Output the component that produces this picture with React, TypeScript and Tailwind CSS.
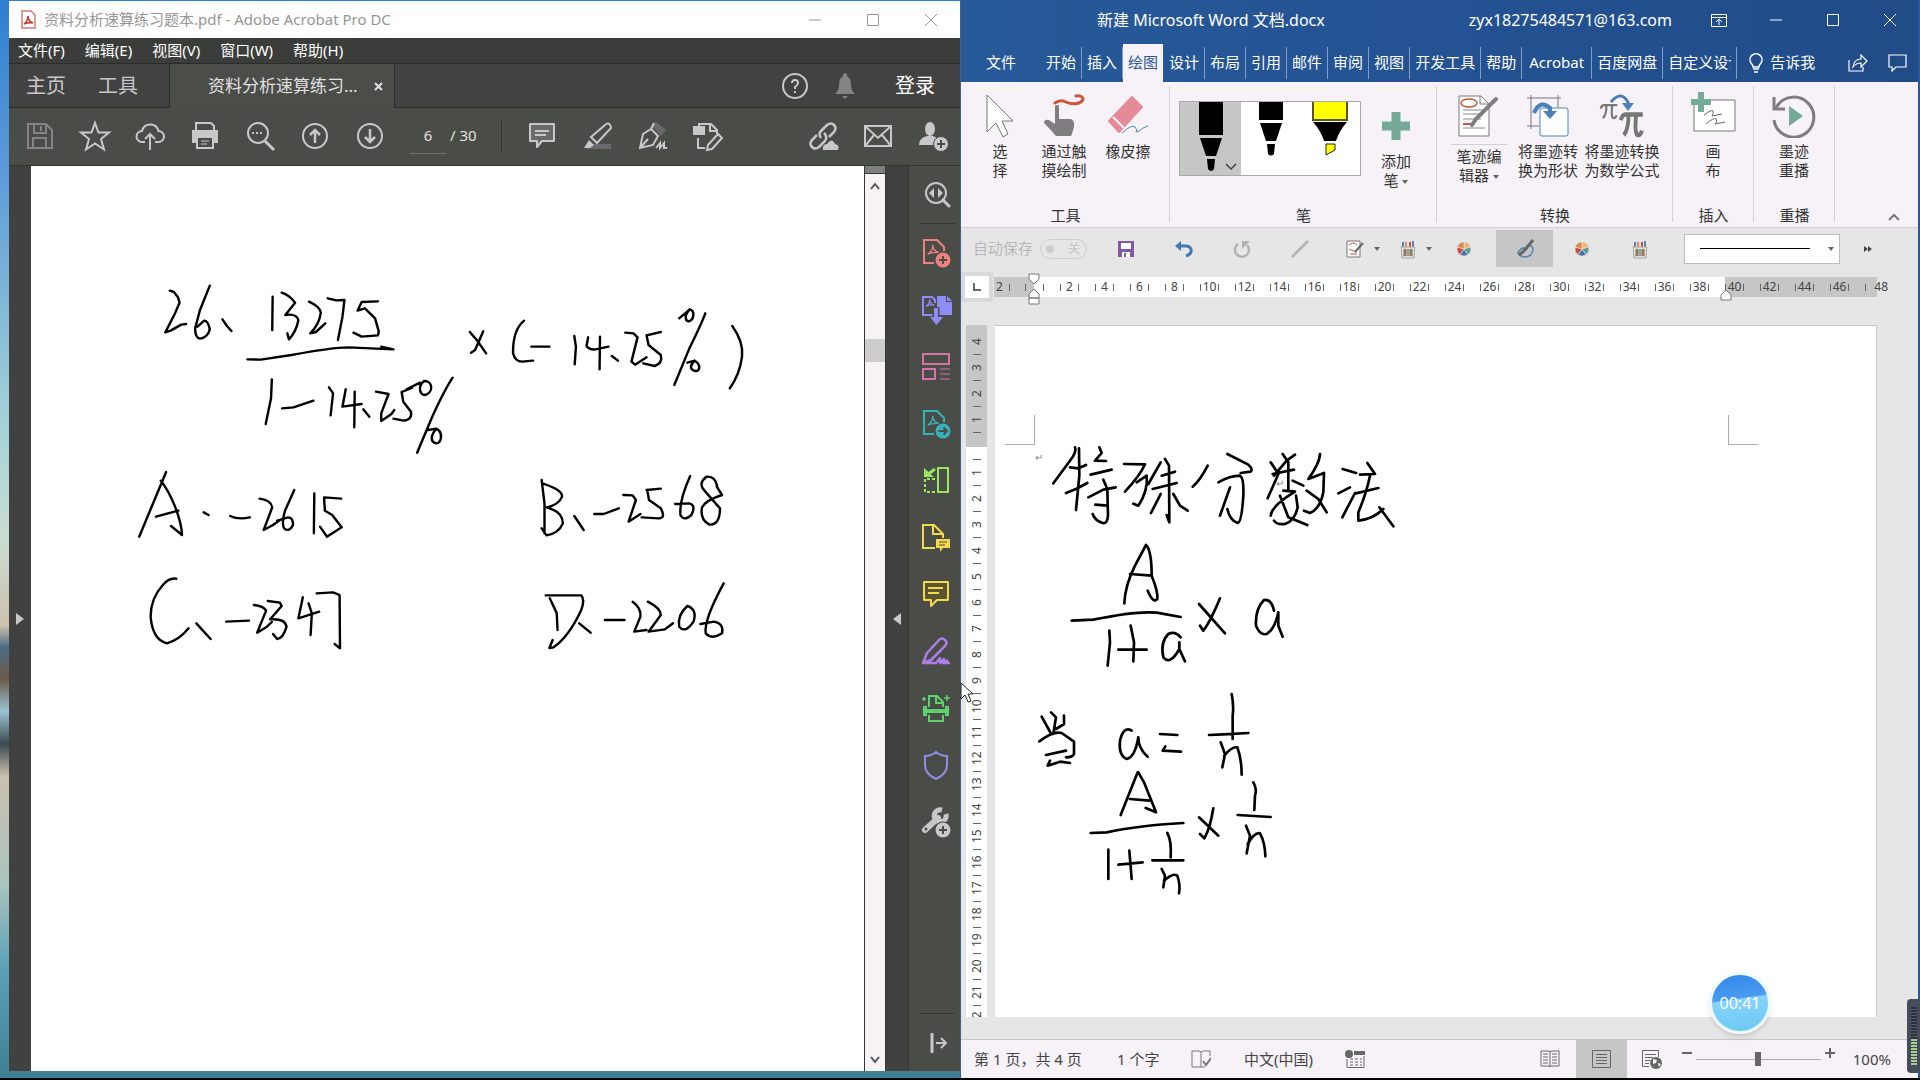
import React from 'react';

type Kids = { children?: React.ReactNode };

function Svg({ w, h, vb, children, className = '' }: Kids & { w: number; h: number; vb?: string; className?: string }) {
  return (
    <svg width={w} height={h} viewBox={vb ?? `0 0 ${w} ${h}`} fill="none" stroke="currentColor" strokeWidth={2} className={`shrink-0 ${className}`} aria-hidden="true">
      {children}
    </svg>
  );
}

function IconButton({ label, children, className = '' }: Kids & { label: string; className?: string }) {
  return (
    <button aria-label={label} className={`flex shrink-0 items-center justify-center ${className}`}>
      {children}
    </button>
  );
}

/* ---------- Acrobat ---------- */

const pdfMark = 'M9 19c4-2 6-6 6-11c0 6 3 8 7 9c-5-.5-9 0-13 2z';

const questionInk = [
  'M122 62L132 66L142 82L146 98L134 132L111 187L124 182L150 164L162 162',
  'M220 47L196 120L184 175Q184 204 196 206Q216 202 220 178Q216 152 206 152L190 170',
  'M251 148L262 168L273 183M374 80L373 180',
  'M396 68Q415 75 429 98L405 135Q432 130 437 150Q432 185 414 208L410 190',
  'M463 95Q490 110 492 128Q488 165 466 190L480 186L503 160',
  'M509 85L530 91L550 90L545 140L534 210',
  'M632 94L592 96L582 122L600 115L625 145L634 185L632 196L592 200L572 188',
  'M312 268L345 269L420 255Q520 232 560 232L670 238L640 230',
  'M857 186L874 210L897 250M890 184L870 240L860 248',
  'M990 152Q962 180 963 250Q968 275 985 275L1012 272M1008 230L1052 230M1113 198L1117 230L1114 283',
  'M1147 202L1143 228Q1150 240 1165 238L1197 230M1176 200L1175 298M1205 258L1220 272',
  'M1238 188L1258 190L1268 202L1253 275L1262 284L1290 262',
  'M1290 196L1325 186M1290 196L1295 225L1325 255Q1330 280 1310 288L1282 280',
  'M1370 145L1396 118C1380 138 1386 154 1394 154C1408 147 1408 122 1396 118',
  'M1434 130Q1425 160 1395 235L1358 345M1390 278L1408 272C1425 285 1420 305 1410 303C1395 300 1396 285 1408 272',
  'M1500 168Q1528 215 1524 260Q1518 315 1494 355',
  'M372 328L370 385L357 462M397 415L425 412L474 392M512 352L522 370L516 436',
  'M553 358L545 410L592 402M575 365L574 472M596 418L611 440',
  'M627 365L658 372L640 430L640 453L665 432L672 420',
  'M690 366L715 354M690 366L694 395L713 425Q716 450 695 452L670 446',
  'M702 358L735 338M745 333C728 350 735 374 747 375C768 368 768 333 745 333',
  'M815 323Q795 360 765 440L728 548M755 480L775 476C795 490 785 522 775 520C758 515 762 495 775 476',
  'M113 606L47 800M100 632C125 670 150 745 152 795L125 768M88 740L143 722M205 727L217 735M270 738Q290 750 318 742',
  'M342 686Q370 690 373 712L352 780L375 765L392 750M427 660L405 720Q395 760 402 775Q415 788 424 765Q424 742 412 742L385 752',
  'M476 670L475 790M500 682L542 686M500 684L502 722L520 735L543 772L507 800L490 770',
  'M1033 630L1040 700L1040 790M1035 640Q1085 660 1083 680Q1075 705 1045 712Q1085 725 1085 760Q1075 790 1045 796L1033 775',
  'M1113 738L1136 780M1162 732L1185 732L1222 715M1233 675L1256 676L1264 690L1246 755L1275 732',
  'M1290 660L1325 656M1292 662L1296 690L1325 715Q1338 745 1320 745L1278 742',
  'M1397 618Q1370 690 1373 735Q1382 755 1400 735Q1412 705 1395 700L1360 702',
  'M1463 648Q1458 618 1437 620Q1415 640 1432 662L1470 715Q1470 765 1444 764Q1420 748 1426 712Q1436 690 1475 675L1462 650',
  'M138 926Q120 922 105 945Q75 985 75 1040Q80 1110 115 1120Q145 1110 168 1075M187 1060L222 1107M260 1055L316 1052',
  'M328 1005Q352 1008 358 1022L336 1088L360 1070L372 1056M362 993L392 998L396 1008L368 1048Q405 1045 408 1070Q400 1105 385 1107L375 1092',
  'M448 982L437 1045L488 1025M462 1000L470 1030L467 1095M482 970L522 967L538 975L539 1135L526 1122',
  'M1043 976L1130 976Q1140 990 1130 1020Q1100 1100 1062 1132L1052 1134L1060 1110M1053 985L1070 1030L1072 1080',
  'M1125 1060L1153 1088M1188 1050L1236 1050M1256 995Q1278 1015 1275 1040L1260 1085L1290 1080',
  'M1293 995Q1325 1015 1325 1035L1295 1085L1335 1078L1355 1060',
  'M1390 1008Q1365 1035 1370 1070Q1385 1092 1405 1055Q1415 1018 1390 1008M1479 940Q1430 1050 1435 1090Q1450 1110 1475 1090Q1480 1060 1455 1055L1422 1062',
];

const toolIcons: { label: string; color: string; art: React.ReactNode }[] = [
  {
    label: '创建 PDF', color: 'text-[#f08080]',
    art: <><path d="M12 25H2V2h13l7 7v4" /><path d={pdfMark} transform="translate(-2 0) scale(.85)" strokeWidth="1.5" /><circle cx="21" cy="22" r="7.5" fill="currentColor" stroke="none" /><path d="M21 18v8M17 22h8" stroke="#4a4c48" /></>,
  },
  {
    label: '合并文件', color: 'text-[#8f8cf5]',
    art: <><path d="M14 20H1V2h9l3 3v3" /><path d="M15 1h9v6h6v13H15z" fill="currentColor" stroke="none" /><path d="M25 1l5 5h-5z" fill="currentColor" stroke="none" /><path d={pdfMark} transform="translate(-2 -1) scale(.65)" strokeWidth="2" /><path d="M14 12v12" stroke="#4a4c48" strokeWidth="7" /><path d="M14 13v11" strokeWidth="4" /><path d="M8 22h13l-6.500 8z" fill="currentColor" stroke="none" /></>,
  },
  {
    label: '组织页面', color: 'text-[#d873a9]',
    art: <><path d="M1 2h26v10H1zM1 17h12v10H1z" /><path d="M18 17h10M18 22h10M18 27h10" strokeWidth="1" /></>,
  },
  {
    label: '导出 PDF', color: 'text-[#36b3b8]',
    art: <><path d="M12 25H2V2h13l7 7v4" /><path d={pdfMark} transform="translate(-2 0) scale(.85)" strokeWidth="1.5" /><circle cx="21" cy="22" r="7.500" fill="currentColor" stroke="none" /><path d="M16.500 22h8M21.500 18.500l3.500 3.500-3.500 3.500" stroke="#4a4c48" /></>,
  },
  {
    label: '扫描', color: 'text-[#9ae65c]',
    art: <><path d="M16 2h10v24H16z" /><path d="M3 13v13h11" strokeDasharray="3 2" /><path d="M13 13H3" strokeDasharray="3 2" /><path d="M13 3l-8 6" strokeWidth="3" /><path d="M2 2v9h10z" fill="currentColor" stroke="none" /></>,
  },
  {
    label: '发送以供注释', color: 'text-[#f3d94b]',
    art: <><path d="M13 25H1V2h11l9 9v4M11 2v9h10" /><path d="M14 16h14v9h-7l-3 4v-4h-4z" fill="currentColor" stroke="none" /><path d="M17 19h8M17 22h6" stroke="#4a4c48" strokeWidth="1" /></>,
  },
  {
    label: '注释', color: 'text-[#f3d94b]',
    art: <><path d="M2 2h24v18H15l-6 6v-6H2z" strokeLinejoin="round" fill="#5a5630" /><path d="M6 8h15M6 13h11" /></>,
  },
  {
    label: '填写和签名', color: 'text-[#ad7ee6]',
    art: <path d="M1 26L5 16L17 3q3-3 6 0t0 6L9 23zM1 26h13l4-5v5l4-4v4l4-3 M20 26h8" strokeLinejoin="round" strokeWidth="2.500" />,
  },
  {
    label: '印刷制作', color: 'text-[#5fd06e]',
    art: <><path d="M7 13V2h8l6 6v5M14 2v7h7" /><path d="M1 12h4v3h18v-3h4v10h-4v-3H5v3H1z" fill="currentColor" stroke="none" /><path d="M7 21v6h14v-6" /><path d="M25 1v6M22 4h6M2 3v4M0 5h4" strokeWidth="1.500" /></>,
  },
  {
    label: '保护', color: 'text-[#8c8ee0]',
    art: <path d="M14 1q5 4 11 4v9q0 9-11 14Q3 23 3 14V5q6 0 11-4z" />,
  },
  {
    label: '更多工具', color: 'text-[#c9c7c9]',
    art: <><path d="M3 22L16 10" strokeWidth="6" strokeLinecap="round" /><path d="M20 2a6 6 0 1 0 4 4" strokeWidth="5" /><circle cx="4" cy="21" r="1.500" fill="#4a4c48" stroke="none" /><circle cx="21" cy="22" r="8.500" fill="#4a4c48" stroke="none" /><circle cx="21" cy="22" r="7.500" fill="currentColor" stroke="none" /><path d="M21 18v8M17 22h8" stroke="#4a4c48" /></>,
  },
];

const barLeft: { label: string; art: React.ReactNode; dim?: boolean }[] = [
  { label: '保存', dim: true, art: <path d="M2 2h18l6 6v18H2zM8 2v9h12V2M15 4v5M7 26V16h13v10" /> },
  { label: '加星标', art: <path d="M14 1l3.500 9.500H28l-8 6.500 3 10.500-9-6-9 6 3-10.500-8-6.500h10.500z" /> },
  { label: '上传', art: <path d="M9 20H6a5.500 5.500 0 0 1 0-11q2-7 9-6.500 6 .5 7.500 6.500a5.500 5.500 0 0 1 0 11H19M14 28V12M9 17l5-5 5 5" /> },
  { label: '打印', art: <><path d="M5 8V1h15l3 3v4" /><path d="M1 8h26v13H1z" fill="currentColor" stroke="none" /><path d="M6 15h16v11H6z" fill="#4a4c48" /><path d="M10 19h8M10 22h6" strokeWidth="1" /></> },
  { label: '查找', art: <><circle cx="12" cy="11" r="10" /><path d="M19 19l9 9" strokeWidth="3" /><path d="M6 11h12" strokeDasharray="2 2" /></> },
  { label: '上一页', art: <><circle cx="14" cy="14" r="12" /><path d="M14 21V8M9 13l5-5 5 5" strokeWidth="2.500" /></> },
  { label: '下一页', art: <><circle cx="14" cy="14" r="12" /><path d="M14 7v13M9 15l5 5 5-5" strokeWidth="2.500" /></> },
];

const barMid: { label: string; art: React.ReactNode }[] = [
  { label: '注释', art: <path d="M2 2h24v17H14l-5 6v-6H2zM7 9h14M7 13h11" fill="#6b696b" strokeLinejoin="round" /> },
  { label: '高亮', art: <><path d="M8 22h20v5H3z" fill="#6b696b" stroke="none" /><path d="M8 15L22 3q3-3 5 0t0 4L14 21zM8 15l6 6" /><path d="M1 26l5-8 5 5-4 3z" fill="currentColor" stroke="none" /></> },
  { label: '签名', art: <><path d="M2 26L5 12 13 7 20 14 15 23zM2 26l8-9" /><path d="M14 4l4-4 10 8-5 6z" fill="#6b696b" stroke="none" /><path d="M16 1l-3 6M18 26l4-5v5l4-5v5h3" /></> },
  { label: '编辑', art: <><path d="M1 5h10v7H1z" fill="currentColor" /><path d="M6 4V2h12l6 6v4M17 2v7h7M5 16v10h7" /><path d="M14 28l1-5 10-11 4 4-10 11z" /></> },
];

const barRight: { label: string; art: React.ReactNode }[] = [
  { label: '共享链接', art: <><path d="M12 16q-3-4 0-7l6-6q4-3 7 0t0 7l-5 5M15 11q4 4 1 8l-6 6q-4 3-7 0t0-7l5-5" strokeWidth="2.500" /><path d="M14 28q-1-6 4-6 5-7 8 0 5 1 3 6z" fill="currentColor" stroke="none" /></> },
  { label: '电子邮件', art: <path d="M1 4h26v20H1zM1 4l13 12L27 4M1 24l9-11M27 24l-9-11" /> },
  { label: '共享', art: <><ellipse cx="11" cy="7" rx="5" ry="7" fill="currentColor" stroke="none" /><path d="M0 23q0-7 8-9h6q6 2 6 9z" fill="currentColor" stroke="none" /><circle cx="22" cy="22" r="7.500" fill="currentColor" stroke="#4a4c48" strokeWidth="1" /><path d="M22 18v8M18 22h8" stroke="#4a4c48" /></> },
];

function BarButton({ label, children, dim }: Kids & { label: string; dim?: boolean }) {
  return (
    <IconButton label={label} className={`h-10 w-[55px] ${dim ? 'text-[#858385]' : 'text-[#c9c7c9]'}`}>
      <Svg w={28} h={28} className="overflow-visible">{children}</Svg>
    </IconButton>
  );
}

function AcrobatWindow() {
  return (
    <section aria-label="Adobe Acrobat Pro DC" className="flex min-h-0 flex-1 flex-col bg-[#4a4c48]">
      <header className="flex h-[37px] shrink-0 items-center bg-white pl-3 text-[#969696]">
        <Svg w={15} h={19} className="text-[#cf7b75]"><path d="M1 1h9l4 4v13H1z" strokeWidth="1.500" /><path d="M3 14q4-3 4-8q0 5 5 7q-5-1-9 1z" strokeWidth="1.500" stroke="#c0392b" /></Svg>
        <h1 className="ml-2 flex-1 truncate text-[15px]">资料分析速算练习题本.pdf - Adobe Acrobat Pro DC</h1>
        <IconButton label="最小化" className="h-full w-[58px]"><Svg w={12} h={12}><path d="M0 6h12" strokeWidth="1" /></Svg></IconButton>
        <IconButton label="最大化" className="h-full w-[58px]"><Svg w={12} h={12}><path d="M.5.5h11v11H.5z" strokeWidth="1" /></Svg></IconButton>
        <IconButton label="关闭" className="h-full w-[58px]"><Svg w={12} h={12}><path d="M0 0l12 12M12 0L0 12" strokeWidth="1" /></Svg></IconButton>
      </header>
      <nav className="flex h-[26px] shrink-0 items-center gap-5 border-b border-[#2a2c2a] bg-[#3b3d3a] pb-[2px] pl-[9px] text-[15px] leading-5 text-white">
        <button>文件(F)</button><button>编辑(E)</button><button>视图(V)</button><button>窗口(W)</button><button>帮助(H)</button>
      </nav>
      <div className="flex h-11 shrink-0 bg-[#424242] text-[#c9c7c9]">
        <div className="flex w-[161px] items-center gap-8 border-r border-b border-[#2a2c2a] pl-[17px] text-[20px]">
          <button>主页</button><button>工具</button>
        </div>
        <div className="flex w-[224px] items-center bg-[#4b4d49] pl-[38px] text-[17px] text-[#e2e0e2]">
          <span className="w-[150px] truncate">资料分析速算练习...</span>
          <IconButton label="关闭标签" className="ml-4"><Svg w={9} h={9}><path d="M1 1l7 7M8 1L1 8" /></Svg></IconButton>
        </div>
        <div className="flex flex-1 items-center justify-end border-b border-l border-[#2a2c2a] pr-[25px]">
          <IconButton label="帮助"><Svg w={28} h={28}><circle cx="14" cy="14" r="12" /><path d="M11 11q0-3 3-3t3 3q0 2-3 4v2M14 19v2" /></Svg></IconButton>
          <IconButton label="通知" className="ml-[25px] text-[#858385]"><Svg w={22} h={26}><path d="M1 21q4-3 4-9 0-8 6-10 6 2 6 10 0 6 4 9zM8 23h6l-3 3z" fill="currentColor" stroke="none" /><circle cx="11" cy="2" r="2" fill="currentColor" stroke="none" /></Svg></IconButton>
          <button className="ml-[39px] text-[20px] text-white">登录</button>
        </div>
      </div>
      <div className="flex h-[58px] shrink-0 items-center border-b border-[#343634] pb-[2px] pl-[3px] text-[#c9c7c9]">
        {barLeft.map((b) => <BarButton key={b.label} label={b.label} dim={b.dim}>{b.art}</BarButton>)}
        <input aria-label="页码" defaultValue="6" className="ml-[13px] h-9 w-9 border-b border-[#6f716e] text-center text-[15px] text-[#e2e0e2]" />
        <span className="ml-1 text-[15px] text-[#e2e0e2]">/ 30</span>
        <span className="ml-6 h-9 w-px bg-[#343634]" />
        <span className="ml-[13px] flex">
          {barMid.map((b) => <BarButton key={b.label} label={b.label}>{b.art}</BarButton>)}
        </span>
        <span className="ml-auto flex">
          {barRight.map((b) => <BarButton key={b.label} label={b.label}>{b.art}</BarButton>)}
        </span>
      </div>
      <div className="flex min-h-0 flex-1">
        <button aria-label="展开导览窗格" className="flex w-[22px] shrink-0 items-center justify-center bg-[#414141] text-[#c9c7c9]">
          <Svg w={8} h={12}><path d="M0 0l8 6-8 6z" fill="currentColor" stroke="none" /></Svg>
        </button>
        <main className="relative min-w-0 flex-1 overflow-hidden bg-white">
          <svg role="img" aria-label="26、13275/(1-14.25%) × (-14.25%)" viewBox="0 0 1568 1290" preserveAspectRatio="none" fill="none" stroke="#000" strokeWidth="2.4" strokeLinecap="round" strokeLinejoin="round" className="absolute top-[104px] left-[89px] h-[430px] w-[640px]">
            {questionInk.map((d) => <path key={d} d={d} vectorEffect="non-scaling-stroke" />)}
          </svg>
        </main>
        <div className="flex w-[22px] shrink-0 flex-col border-x border-[#343634] bg-[#f6f2f6] text-[#555]">
          <div className="h-2 border-b border-[#343634] bg-[#7d7f7c]" />
          <IconButton label="向上滚动" className="h-6"><Svg w={10} h={8}><path d="M1 7l4-5 4 5" /></Svg></IconButton>
          <div className="mt-[141px] h-[23px] bg-[#cdcbcd]" />
          <IconButton label="向下滚动" className="mt-auto h-[22px]"><Svg w={10} h={8}><path d="M1 1l4 5 4-5" /></Svg></IconButton>
        </div>
        <button aria-label="收起工具窗格" className="flex w-[22px] shrink-0 items-center justify-center bg-[#414141] text-[#c9c7c9]">
          <Svg w={8} h={12}><path d="M8 0L0 6l8 6z" fill="currentColor" stroke="none" /></Svg>
        </button>
        <aside className="flex w-[52px] shrink-0 flex-col items-center border-l border-[#343634] pl-1">
          <IconButton label="搜索工具" className="h-[57px] text-[#c9c7c9]"><Svg w={28} h={28}><circle cx="13" cy="12" r="10" /><path d="M20 19l6 6" strokeWidth="3" strokeLinecap="round" /><path d="M11 7v10l-5-5zM15 7v10l5-5z" fill="currentColor" stroke="none" /></Svg></IconButton>
          <div className="h-px w-9 shrink-0 bg-[#343634]" />
          {toolIcons.map((t) => (
            <IconButton key={t.label} label={t.label} className={`h-[57px] ${t.color}`}>
              <Svg w={29} h={29} className="overflow-visible">{t.art}</Svg>
            </IconButton>
          ))}
          <div className="mt-auto h-px w-9 shrink-0 bg-[#343634]" />
          <IconButton label="折叠" className="h-[57px] pl-1 text-[#c9c7c9]"><Svg w={18} h={20}><path d="M2 1v18" strokeWidth="3" strokeLinecap="round" /><path d="M6 10h10M11 5l5 5-5 5" /></Svg></IconButton>
        </aside>
      </div>
    </section>
  );
}

/* ---------- Word ---------- */

const tabs = ['开始', '插入', '绘图', '设计', '布局', '引用', '邮件', '审阅', '视图', '开发工具', '帮助', 'Acrobat', '百度网盘'];

const notesInk = [
  'M315 415Q320 430 300 455L250 523M327 418L328 500L318 603M300 475L325 478L348 468M288 552L318 540L352 522',
  'M388 415L395 432L375 455L408 456M362 497L425 482M355 565L400 542L437 535M400 512L412 540L414 620Q412 645 398 642Q375 635 368 615M376 587L412 590',
  'M462 465L525 466Q510 500 465 548M500 520L530 500Q535 545 505 590L490 584M572 460L535 525',
  'M585 450L597 470L598 640L590 618M575 500L615 488M548 540L620 522M572 555L543 612M610 555L630 590L653 605',
  'M713 470Q690 515 668 533M772 435L835 467Q850 480 842 488L812 492M745 520Q780 500 810 500Q822 505 820 560Q815 640 803 642Q780 635 772 600M780 535L750 620',
  'M902 460L922 490M975 437L950 455L912 500M908 495L972 482M938 435L955 460L955 545M925 495L893 568M968 515L1000 530',
  'M940 545L975 548Q905 590 902 620M930 560L955 625L1012 648M978 560L983 595Q975 635 945 645Q920 648 912 635',
  'M1050 435Q1050 460 1015 510L1062 492L1060 550Q1050 600 1020 612L1002 605M1010 545L1045 570L1070 610',
  'M1118 480L1158 492M1105 553L1140 535M1117 625L1155 552M1192 462L1215 495L1170 497M1158 553L1225 537M1200 500Q1190 550 1165 610L1165 635Q1210 630 1240 600M1228 595L1270 652',
  'M528 708L495 770Q465 830 463 883M530 710Q545 730 545 800Q565 850 562 870Q550 885 533 845M480 795L545 800',
  'M305 935L370 932Q500 905 560 911L632 924M687 885L765 973M750 868Q720 940 700 965L690 950',
  'M912 905Q905 870 882 873Q855 900 858 950Q870 980 890 975Q915 960 925 910L925 950L938 983',
  'M418 965L420 1000L413 1070M482 950L492 1000L490 1057M445 1022L530 1022M632 985Q615 965 595 975Q570 1000 580 1045Q600 1070 628 1020L628 1000M628 1020L645 1057',
  'M215 1223L242 1272M243 1210L258 1225L250 1275M282 1220L282 1245L258 1260M208 1297Q250 1265 275 1272L312 1298L312 1335Q308 1345 288 1345M228 1338L288 1325M240 1355L233 1370L270 1358L300 1362',
  'M485 1265Q460 1250 450 1295Q445 1340 470 1350Q495 1345 505 1285M505 1285Q505 1320 533 1343M570 1275L622 1278M586 1312L578 1325L633 1328',
  'M785 1155Q792 1190 788 1220L788 1290M717 1278L760 1276L835 1272M752 1300L765 1335L757 1375M763 1340Q785 1312 802 1315Q815 1350 815 1397',
  'M503 1390L452 1518M505 1390L522 1420L558 1510L527 1497M480 1470L538 1475M362 1572L410 1570Q500 1550 640 1542',
  'M415 1622L415 1710M478 1625L485 1710M445 1667L518 1660M592 1572Q605 1595 602 1645M547 1654L640 1654',
  'M575 1680L585 1700L580 1735M582 1715Q610 1690 622 1700Q632 1730 627 1753M687 1525L745 1580M730 1498Q720 1560 703 1588L690 1575',
  'M850 1420Q862 1440 855 1460L853 1503M803 1518L902 1524M828 1550L840 1580L830 1633M833 1605Q855 1568 870 1573Q885 1600 886 1642',
];

function Caret() {
  return <Svg w={6} h={4} className="inline-block align-middle text-[#666]"><path d="M0 0h6L3 4z" fill="currentColor" stroke="none" /></Svg>;
}

function Group({ label, className, children }: Kids & { label: string; className: string }) {
  return (
    <div role="group" aria-label={label} className={`relative flex shrink-0 flex-col ${className} after:absolute after:top-1 after:right-0 after:bottom-[5px] after:w-px after:bg-[#d2d0d2]`}>
      <div className="flex h-[123px]">{children}</div>
      <div className="text-center leading-5">{label}</div>
    </div>
  );
}

function Big({ lines, icon, className, caret }: { lines: string[]; icon: React.ReactNode; className: string; caret?: boolean }) {
  return (
    <button className={`flex flex-col items-center pt-3 leading-[19px] whitespace-nowrap ${className}`}>
      <span className="flex h-11 items-start">{icon}</span>
      <span className="mt-1">
        {lines.map((l, i) => <span key={l} className="block">{l}{caret && i === lines.length - 1 && <> <Caret /></>}</span>)}
      </span>
    </button>
  );
}

const pi = 'M1 8Q2 3 6 3H24M9 3Q9 16 4 21M17 3Q15 21 19 21Q22 21 23 17';

function Cup() {
  return (
    <Svg w={16} h={20}>
      <path d="M3 9V3M13 9V2" stroke="#5f7fae" /><path d="M6 9V3" stroke="#d08b5e" /><path d="M10 9V3" stroke="#d3473b" />
      <path d="M1 8h14l-1 11H2z" stroke="#aaa" strokeWidth="1" fill="#ddd" /><path d="M5 10v7M11 10v7" stroke="#8a7a56" strokeWidth="3" /><path d="M8 10v7" stroke="#555" strokeWidth="1" />
    </Svg>
  );
}

function Wheel() {
  return (
    <Svg w={14} h={14}>
      <g stroke="#e7e5e7" strokeWidth=".6">
        <path d="M7 7V0A7 7 0 0 1 13.700 5z" fill="#e9b872" /><path d="M7 7l6.700-2A7 7 0 0 1 11 12.700z" fill="#5d9c93" />
        <path d="M7 7l4 5.700a7 7 0 0 1-8 0z" fill="#4472a8" /><path d="M7 7l-4 5.700A7 7 0 0 1 .3 5z" fill="#c84f3f" /><path d="M7 7L.3 5A7 7 0 0 1 7 0z" fill="#dd8a4c" />
      </g>
    </Svg>
  );
}

function TitleAndTabs() {
  return (
    <header className="shrink-0 bg-linear-to-r from-[#275a98] via-[#245292] to-[#204b87] text-[15px] text-white">
      <div className="flex h-10 items-center text-[16px]">
        <h1 className="flex-1 truncate pr-2 text-center">新建 Microsoft Word 文档.docx</h1>
        <span className="mr-[18px]">zyx18275484571@163.com</span>
        <IconButton label="功能区显示选项" className="h-full w-[57px]"><Svg w={16} h={13}><path d="M.5.5h15v12H.5zM.5 3.500h15M8 11V5M5 8l3-3 3 3" strokeWidth="1" /></Svg></IconButton>
        <IconButton label="最小化" className="h-full w-[57px]"><Svg w={12} h={12}><path d="M0 6h12" strokeWidth="1" /></Svg></IconButton>
        <IconButton label="最大化" className="h-full w-[57px]"><Svg w={12} h={12}><path d="M.5.5h11v11H.5z" strokeWidth="1" /></Svg></IconButton>
        <IconButton label="关闭" className="h-full w-[57px]"><Svg w={12} h={12}><path d="M0 0l12 12M12 0L0 12" strokeWidth="1" /></Svg></IconButton>
      </div>
      <nav className="flex h-[42px] items-stretch pt-1">
        <button className="w-20 pb-[2px]">文件</button>
        {tabs.map((t) => (
          <button
            key={t}
            className={
              t === '绘图'
                ? 'w-[41px] border-r border-[#2b579a] bg-[#f6f2f7] pb-[2px] text-[#2b579a]'
                : t === 'Acrobat'
                  ? 'my-[3px] w-[70px] border-r border-[#7f9fcb] pb-[2px]'
                  : 'my-[3px] border-r border-[#7f9fcb] px-[5px] pb-[2px]'
            }
          >
            {t}
          </button>
        ))}
        <button className="my-[3px] w-[74px] border-r border-[#7f9fcb] px-[5px] pb-[2px] text-left">
          <span className="block w-[63px] overflow-hidden whitespace-nowrap">自定义设计</span>
        </button>
        <button className="ml-[11px] flex items-center gap-[6px] pb-[2px]">
          <Svg w={16} h={21}><path d="M5 15q0-2-2-4a6 6 0 1 1 10 0q-2 2-2 4zM5 17h6M6 20h4" strokeWidth="1.500" /></Svg>
          告诉我
        </button>
        <span className="mr-[11px] ml-auto flex gap-5">
          <IconButton label="共享"><Svg w={20} h={18}><path d="M1 6v11h14v-4M5 13q1-8 8-8V1l6 6-6 6V9q-5 0-8 4z" strokeWidth="1.200" /></Svg></IconButton>
          <IconButton label="批注"><Svg w={19} h={18}><path d="M1 1h17v12H8l-4 4v-4H1z" strokeWidth="1.200" /></Svg></IconButton>
        </span>
      </nav>
    </header>
  );
}

function Ribbon() {
  return (
    <div className="flex h-[146px] shrink-0 border-b border-[#d2d0d2] bg-[#f6f2f7] text-[15px] text-[#333]">
      <Group label="工具" className="w-[209px]">
        <Big className="ml-[7px] w-16" lines={['选', '择']} icon={<Svg w={28} h={44}><path d="M1 1v37l9-9 7 14 5-3-6-13h11z" fill="#fff" stroke="#777" strokeWidth="1" /></Svg>} />
        <Big className="w-16" lines={['通过触', '摸绘制']} icon={<Svg w={42} h={44}><path d="M12 9q5-4 11-1t13 1q6-3 3-6-2-2-6-1" stroke="#c9553b" strokeWidth="3" strokeLinecap="round" /><path d="M12 12q3-2 4 0v13h12q4 2 3 8-2 7-3 9H13Q6 34 1 29q0-4 5-3l6 4z" fill="#7f7d7f" stroke="none" /></Svg>} />
        <Big className="w-16" lines={['橡皮擦']} icon={<Svg w={40} h={42}><path d="M1 27L24 3l10 10-23 25z" fill="#e58a98" stroke="#e58a98" strokeLinejoin="round" /><path d="M5 23l11 11" stroke="#f6f2f7" /><path d="M14 39q10-9 13-6t1 5q3 0 7-4l5-2" stroke="#4a86b0" strokeWidth="1" /></Svg>} />
      </Group>
      <Group label="笔" className="w-[267px]">
        <div className="mt-[19px] ml-[9px] flex h-[75px] w-[182px] shrink-0 border border-[#aaa8aa] bg-white text-black">
          <button aria-label="笔 1" className="relative flex w-[61px] justify-center bg-[#c6c6c6]">
            <Svg w={24} h={70}><path d="M0 0h24v33H0zM1 36h22l-6 18H7zM8 57h8l-1 10q-3 4-6 0z" fill="currentColor" stroke="none" /></Svg>
            <Svg w={12} h={8} className="absolute right-1 bottom-1 text-[#444]"><path d="M1 1l5 5 5-5" strokeWidth="1.500" /></Svg>
          </button>
          <button aria-label="笔 2" className="flex w-[59px] justify-center">
            <Svg w={24} h={70}><path d="M0 0h24v18H0zM1 21h22l-6 18H7zM8 42h8l-1 10q-3 3-6 0z" fill="currentColor" stroke="none" /></Svg>
          </button>
          <button aria-label="荧光笔" className="flex w-[60px] justify-center">
            <Svg w={36} h={70}><path d="M1-1h34v19H1z" fill="#ff0" stroke="#55551a" /><path d="M1 20h34q-8 9-11 19H12Q9 29 1 20z" fill="currentColor" stroke="none" /><path d="M14 42h9v6l-9 5z" fill="#ff0" stroke="#222" strokeWidth="1" /></Svg>
          </button>
        </div>
        <button className="ml-[5px] flex w-[60px] flex-col items-center pt-[30px] leading-[19px]">
          <Svg w={28} h={28}><path d="M14 0v28M0 14h28" stroke="#75aa98" strokeWidth="9" /></Svg>
          <span className="mt-3 block">添加</span>
          <span className="block">笔 <Caret /></span>
        </button>
      </Group>
      <Group label="转换" className="w-[236px]">
        <button className="ml-[7px] flex w-[70px] flex-col items-center pt-3 leading-[19px]">
          <Svg w={42} h={44}><path d="M1 2h22l8 8v32H1z" fill="#fff" stroke="#777" strokeWidth="1" /><path d="M22 2v8h9" stroke="#777" strokeWidth="1" /><path d="M5 16h21M5 20h17M5 25h18M5 30h6M5 34h22" stroke="#888" strokeWidth="1" /><ellipse cx="11" cy="9" rx="8" ry="4" stroke="#c9553b" strokeWidth="1.500" /><path d="M5 30h10" stroke="#c9553b" /><path d="M38 5L18 25l-4 6" stroke="#7f7d7f" strokeWidth="4" strokeLinecap="round" /></Svg>
          <span className="mt-[6px] h-px w-14 bg-[#d2d0d2]" />
          <span className="mt-[2px] block">笔迹编</span>
          <span className="block">辑器 <Caret /></span>
        </button>
        <Big className="w-[68px]" lines={['将墨迹转', '换为形状']} icon={<Svg w={44} h={44}><path d="M5 1v34M32 1v12M1 4h34M1 32h12" stroke="#777" strokeWidth="1" /><rect x="14" y="14" width="28" height="28" rx="2" fill="#fff" stroke="#4a86b0" strokeWidth="1" /><path d="M8 19q6-14 16-5v6" stroke="#4a80b8" strokeWidth="4" /><path d="M17 17h14l-7 8z" fill="#4a80b8" stroke="none" /></Svg>} />
        <Big className="w-20" lines={['将墨迹转换', '为数学公式']} icon={<Svg w={46} h={46}><path d={pi} transform="translate(1 9) scale(.72)" stroke="#777" strokeWidth="3" /><path d={pi} transform="translate(21 17) scale(.95 1.150)" stroke="#777" strokeWidth="4" /><path d="M12 8Q22-4 29 8v3" stroke="#4a80b8" strokeWidth="3" /><path d="M23 9h12l-6 8z" fill="#4a80b8" stroke="none" /></Svg>} />
      </Group>
      <Group label="插入" className="w-[81px]">
        <Big className="w-20" lines={['画', '布']} icon={<Svg w={46} h={42} className="overflow-visible"><path d="M4 6h41v31H4z" fill="#fff" stroke="#777" strokeWidth="1" /><path d="M14 21q8-6 9-4t-1 5l10-2M16 30q8-7 10-5t-1 5l10-2" stroke="#666" strokeWidth="1" /><path d="M11-2v20M1 8h20" stroke="#75aa98" strokeWidth="6" /></Svg>} />
      </Group>
      <Group label="重播" className="w-[81px]">
        <Big className="w-20" lines={['墨迹', '重播']} icon={<Svg w={44} h={44}><path d="M4 14a20 20 0 1 1-2 12" stroke="#7f7d7f" strokeWidth="3" /><path d="M2 3v12h11" stroke="#7f7d7f" strokeWidth="3" /><path d="M17 12l14 10-14 10z" fill="#75aa98" stroke="none" /></Svg>} />
      </Group>
      <IconButton label="折叠功能区" className="mt-auto mr-[18px] mb-[6px] ml-auto text-[#777]"><Svg w={12} h={8}><path d="M1 7l5-5 5 5" /></Svg></IconButton>
    </div>
  );
}

function QuickAccess() {
  return (
    <div className="flex h-11 shrink-0 items-center pb-[3px] pl-3 text-[15px]">
      <label htmlFor="autosave" className="w-[67px] text-[#b9b7b9]">自动保存</label>
      <span className="relative flex h-5 w-[47px] items-center justify-end rounded-full border border-[#cfcdcf] pr-[6px] text-[12px] text-[#c4c2c4]">
        <input id="autosave" type="checkbox" className="absolute inset-0 appearance-none before:absolute before:top-[5px] before:left-[5px] before:size-2 before:rounded-full before:bg-[#cfcdcf]" />
        关
      </span>
      <IconButton label="保存" className="ml-[10px] w-[58px]"><Svg w={16} h={16}><path d="M0 0h16v16H0z" fill="#8158a3" stroke="none" /><path d="M3 2h10v6H3zM4 11h8v5H4z" fill="#fff" stroke="none" /><path d="M7 12v4" stroke="#8158a3" /></Svg></IconButton>
      <IconButton label="撤消" className="w-[58px]"><Svg w={18} h={16}><path d="M3 5h9q5 1 4 6-1 3-5 4" stroke="#3f7ab5" strokeWidth="3" /><path d="M0 5l6-5v10z" fill="#3f7ab5" stroke="none" /></Svg></IconButton>
      <IconButton label="恢复" className="w-[58px]"><Svg w={18} h={18}><path d="M5 4a7 7 0 1 0 9 1" stroke="#b3b1b3" strokeWidth="2.500" /><path d="M17 1H9v8z" fill="#b3b1b3" stroke="none" /></Svg></IconButton>
      <IconButton label="画笔" className="w-[58px]"><Svg w={18} h={18}><path d="M17 1L6 12l-5 5" stroke="#b3b1b3" strokeWidth="2.500" /></Svg></IconButton>
      <IconButton label="笔迹编辑器" className="ml-[17px] gap-[10px]"><Svg w={18} h={18}><path d="M1 1h13v16H1z" fill="#fff" stroke="#777" strokeWidth="1" /><path d="M3 5q5-4 8 0M3 9l7 3M4 14h7" stroke="#c9553b" strokeWidth="1" /><path d="M17 3l-8 9" stroke="#666" /></Svg><Caret /></IconButton>
      <IconButton label="笔" className="ml-5 gap-[10px]"><Cup /><Caret /></IconButton>
      <IconButton label="颜色" className="w-[64px]"><Wheel /></IconButton>
      <IconButton label="墨迹" className="h-[37px] w-[57px] bg-[#c6c6c6]"><Svg w={20} h={20}><path d="M11 7q7-2 7 4-1 7-9 7Q1 16 4 12q4-5 9-2" stroke="#4a86b0" strokeWidth="1.500" /><path d="M18 1L9 12l-5 4" stroke="#666" strokeWidth="3" /></Svg></IconButton>
      <IconButton label="颜色 2" className="w-[58px]"><Wheel /></IconButton>
      <IconButton label="笔 2" className="w-[58px]"><Cup /></IconButton>
      <span className="relative ml-[15px] flex h-[30px] w-[156px] items-center">
        <select aria-label="线型" className="absolute inset-0 appearance-none border border-[#bdbbbd] bg-white"><option aria-label="实线" /></select>
        <span className="pointer-events-none relative ml-4 h-px w-[110px] bg-black" />
        <span className="pointer-events-none relative ml-[18px] flex"><Caret /></span>
      </span>
      <IconButton label="更多" className="ml-6 text-[#444]"><Svg w={8} h={6}><path d="M0 0l4 3-4 3zM4 0l4 3-4 3z" fill="currentColor" stroke="none" /></Svg></IconButton>
    </div>
  );
}

function Tick() {
  return <span className="h-[7px] w-px bg-[#666]" />;
}

function HorizontalRuler() {
  return (
    <div className="flex h-[31px] shrink-0 items-center pb-px">
      <button aria-label="制表符" className="flex h-[30px] w-8 shrink-0 items-center justify-center border-4 border-[#d9d9dc] bg-white">
        <Svg w={8} h={8} className="text-[#666]"><path d="M1 0v7h7" /></Svg>
      </button>
      <div className="relative ml-px flex h-5 w-[883px] items-center bg-[linear-gradient(to_right,#c6c6c6_40px,#ffffff_40px,#ffffff_731px,#c6c6c6_731px)] text-[12px] leading-none text-[#444]">
        <span className="flex w-[23px] shrink-0 items-center gap-[6px] pl-[2px]">2<Tick /></span>
        {Array.from({ length: 25 }, (_, i) => i * 2).map((n) => (
          <span key={n} className="flex w-[35px] shrink-0 justify-center">
            <span className="flex w-[19px] items-center justify-between">
              <Tick />{n > 0 && <span className="-mx-1">{n}</span>}{n < 48 && <Tick />}
            </span>
          </span>
        ))}
        <Svg w={12} h={34} className="absolute -top-1 left-[34px] text-[#777]"><path d="M1 1h10v5l-5 5-5-5zM1 25v-4l5-5 5 5v4zM1 25h10v6H1z" fill="#fff" strokeWidth="1" /></Svg>
        <Svg w={12} h={12} className="absolute top-3 left-[726px] text-[#777]"><path d="M1 11V6l5-5 5 5v5z" fill="#fff" strokeWidth="1" /></Svg>
      </div>
    </div>
  );
}

function VLabel({ n, after }: { n: number; after?: boolean }) {
  return (
    <span className={`flex h-[26px] shrink-0 items-center ${after ? 'flex-col-reverse' : 'flex-col'}`}>
      <span className="flex h-[25px] rotate-180 items-center justify-center text-center leading-none [writing-mode:vertical-rl]">
        <span>{n}</span>
      </span>
      <span className="h-px w-2 shrink-0 bg-[#666]" />
    </span>
  );
}

function Editor() {
  return (
    <div className="flex min-h-0 flex-1 pt-[22px] pb-[22px]">
      <div className="ml-[5px] flex w-[21px] shrink-0 flex-col overflow-hidden bg-white text-[12px] text-[#444]">
        <div className="flex h-[122px] shrink-0 flex-col bg-[#c6c6c6] pt-1">
          {[4, 3, 2, 1].map((n) => <VLabel key={n} n={n} />)}
        </div>
        <div className="flex min-h-0 flex-1 flex-col overflow-hidden pt-3">
          <span className="h-px w-2 shrink-0 self-center bg-[#666]" />
          {Array.from({ length: 22 }, (_, i) => i + 1).map((n) => <VLabel key={n} n={n} />)}
        </div>
      </div>
      <main className="relative mr-[41px] ml-2 min-w-0 flex-1 border-t border-r border-[#c6c6c6] bg-white">
        <span className="absolute top-[89px] left-[10px] size-[30px] border-r border-b border-[#aaa]" />
        <span className="absolute top-[89px] right-[118px] size-[30px] border-b border-l border-[#aaa]" />
        <span className="absolute top-[126px] left-10 text-[10px] leading-none text-[#888]">↵</span>
        <span className="absolute top-[152px] left-[281px] text-[10px] leading-none text-[#888]">↵</span>
        <svg role="img" aria-label="特殊分数法" width="455" height="700" viewBox="75 51 1365 2100" fill="none" stroke="#000" strokeWidth="8" strokeLinecap="round" strokeLinejoin="round" className="absolute top-0 left-0">
          {notesInk.map((d) => <path key={d} d={d} />)}
        </svg>
      </main>
    </div>
  );
}

function StatusBar() {
  return (
    <footer className="flex h-[39px] shrink-0 items-center border-t border-[#c6c6c6] bg-[#f6f2f7] pl-[13px] text-[15px] text-[#444]">
      <span className="w-[143px]">第 1 页，共 4 页</span>
      <span className="w-[74px]">1 个字</span>
      <Svg w={20} h={18} className="text-[#777]"><path d="M10 2v15H1V1h7zM10 2l2-1h7v5M10 17h4" strokeWidth="1" /><path d="M12 11l3 4 5-7" /></Svg>
      <span className="ml-[33px] w-[101px]">中文(中国)</span>
      <Svg w={20} h={18} className="text-[#666]"><circle cx="4" cy="4" r="4" fill="currentColor" stroke="none" /><path d="M9 1h11v4H9z" fill="currentColor" stroke="none" /><path d="M2 9v8.500h17V6" strokeWidth="1" /><path d="M5 9h12M5 12h12M5 15h12" strokeWidth="1" strokeDasharray="3 2" /></Svg>
      <div className="mr-[27px] ml-auto flex h-full items-center text-[#666]">
        <IconButton label="阅读视图" className="h-full w-[51px]"><Svg w={20} h={18}><path d="M1 1h8l1 1 1-1h8v15h-8l-1 1-1-1H1zM10 2v15M3 4h5M3 7h5M3 10h5M3 13h5M12 4h5M12 7h5M12 10h5M12 13h5" strokeWidth="1" /></Svg></IconButton>
        <IconButton label="页面视图" className="h-full w-[51px] bg-[#c6c6c6]"><Svg w={19} h={18}><path d="M.5.5h18v17H.5zM4 4.500h11M4 7.500h11M4 10.500h11M4 13.500h11" strokeWidth="1" /></Svg></IconButton>
        <IconButton label="Web 版式视图" className="h-full w-[51px]"><Svg w={20} h={19}><path d="M7 16.500H.5V.5h16V7M3 4.500h11M3 7.500h8M3 10.500h5M3 13.500h4" strokeWidth="1" /><circle cx="14" cy="13" r="6" fill="currentColor" stroke="none" /><path d="M11 9l4 1-1 3-3 1zM16 13l3 1-2 3z" fill="#f6f2f7" stroke="none" /></Svg></IconButton>
        <IconButton label="缩小" className="ml-1 pb-3"><Svg w={10} h={10}><path d="M0 5h10" /></Svg></IconButton>
        <input aria-label="显示比例" type="range" min="10" max="190" defaultValue="100" className="mx-1 h-4 w-[125px] appearance-none bg-[linear-gradient(#aaa,#aaa)] bg-[length:100%_1px] bg-center bg-no-repeat [&::-webkit-slider-thumb]:h-[14px] [&::-webkit-slider-thumb]:w-[6px] [&::-webkit-slider-thumb]:appearance-none [&::-webkit-slider-thumb]:bg-[#666]" />
        <IconButton label="放大" className="pb-3"><Svg w={10} h={10}><path d="M0 5h10M5 0v10" /></Svg></IconButton>
        <span className="ml-[18px] text-[#444]">100%</span>
      </div>
    </footer>
  );
}

function WordWindow() {
  return (
    <section aria-label="Microsoft Word" className="relative flex w-1/2 min-w-0 flex-col border-r-2 border-l border-r-[#2b579a] border-l-[#3f5f8c] bg-[#e6e6e6]">
      <TitleAndTabs />
      <Ribbon />
      <QuickAccess />
      <HorizontalRuler />
      <Editor />
      <StatusBar />
      <div className="absolute right-[147px] bottom-[44px] flex size-[62px] items-center justify-center rounded-full border-[3px] border-[#eefaff] bg-[linear-gradient(172deg,#3187e8_0%,#4a9cf0_42%,#86d3fa_44%,#6cc8f5_100%)] text-[16px] text-white shadow-md">00:41</div>
    </section>
  );
}

export default function App() {
  return (
    <div className="flex h-screen w-full flex-col overflow-hidden bg-black font-['Noto_Sans','Noto_Sans_CJK_SC',sans-serif]">
      <div className="relative flex min-h-0 flex-1">
        <div className="flex w-1/2 min-w-0 flex-col bg-[linear-gradient(#2f7fd0_0%,#5b9bd8_16%,#a6d4d8_40%,#c9dcd2_50%,#cfc1ae_58%,#4d6d85_60%,#6b5a48_63%,#9cc3d4_66%,#3a4a50_69%,#cbbfae_72%,#a9c4bf_82%,#5aa0b8_90%,#3f7f94_100%)] pt-px pb-[7px] pl-[9px]">
          <AcrobatWindow />
        </div>
        <WordWindow />
        <Svg w={14} h={22} className="pointer-events-none absolute top-[682px] left-1/2"><path d="M1 1v16l4-4 3 7 3-1-3-7h5z" fill="#fff" stroke="#222" strokeWidth="1" /></Svg>
        <div className="absolute right-0 bottom-[5px] flex h-[74px] w-[13px] flex-col items-center justify-end rounded-l bg-[#454d5c] pb-2">
          <span className="h-8 w-[6px] bg-[repeating-linear-gradient(#2a303c_0_2px,#555d6c_2px_3px)]" />
          <span className="h-[26px] w-[6px] bg-[repeating-linear-gradient(#a9d08a_0_2px,#454d5c_2px_3px)]" />
        </div>
      </div>
      <div className="h-[2px] shrink-0 bg-black" />
    </div>
  );
}
